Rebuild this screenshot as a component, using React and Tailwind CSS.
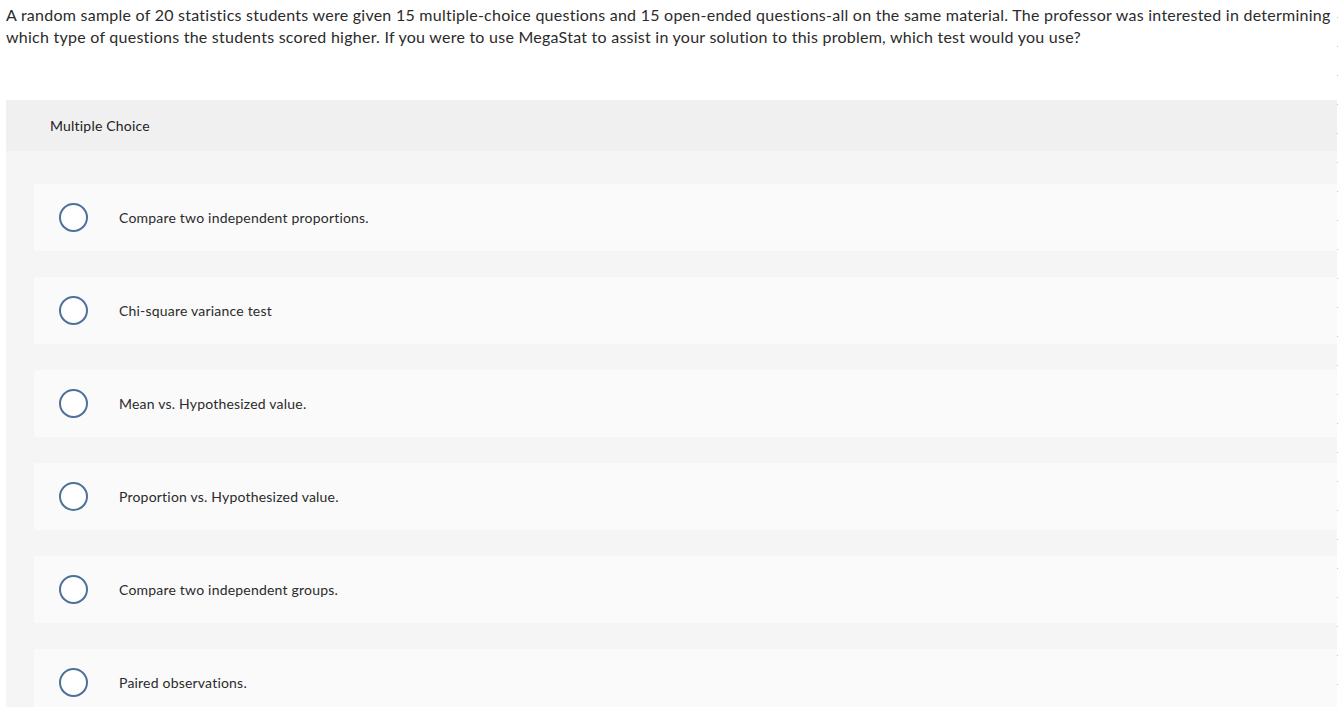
import React from "react";

const options = [
  "Compare two independent proportions.",
  "Chi-square variance test",
  "Mean vs. Hypothesized value.",
  "Proportion vs. Hypothesized value.",
  "Compare two independent groups.",
  "Paired observations.",
];

const Radio = () => (
  <span className="block w-[29px] h-[29px] rounded-full border-2 border-[#4d7199] bg-white shrink-0" />
);

export default function App() {
  return (
    <div className="min-h-screen bg-white text-[#333] font-['Lato',sans-serif] overflow-hidden flex">
      <div className="w-[1337px] shrink-0">
        <p className="pl-[6px] pr-[2px] pt-[4px] text-[16px] leading-[22px] tracking-[0.25px] text-[#2b2b2b]">
          A random sample of 20 statistics students were given 15 multiple-choice questions and 15 open-ended questions-all on the same material. The professor was interested in determining which type of questions the students scored higher. If you were to use MegaStat to assist in your solution to this problem, which test would you use?
        </p>

        <div className="mt-[52px] ml-[6px]">
          <div className="h-[51px] bg-[#f0f0f0] flex items-center pl-[44px] text-[14px] tracking-[0.2px] text-[#222]">
            Multiple Choice
          </div>
          <div className="bg-[#f5f5f5] pl-[28px] pt-[33px] pb-[20px] flex flex-col gap-[26px]">
            {options.map((o) => (
              <div key={o} className="h-[67px] bg-[#fafafa] flex items-center pl-[25px]">
                <Radio />
                <span className="ml-[31px] text-[14px] tracking-[0.2px] text-[#2b2b2b]">{o}</span>
              </div>
            ))}
          </div>
        </div>
      </div>
      <div className="w-px self-stretch bg-[repeating-linear-gradient(to_bottom,transparent_0,transparent_17px,#c4c4c4_17px,#c4c4c4_18px,transparent_18px,transparent_29px)]" />
    </div>
  );
}
